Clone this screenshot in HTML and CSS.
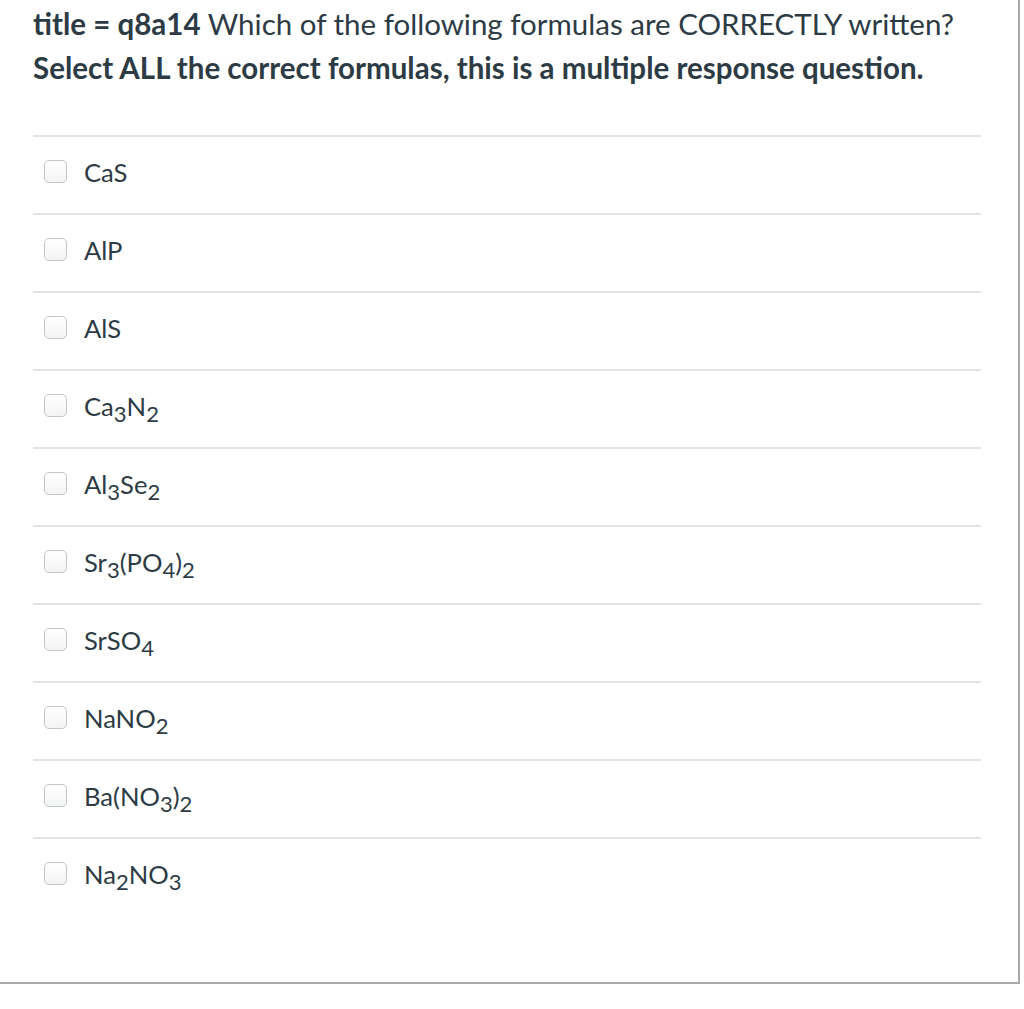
FILE: index.html
```html
<!DOCTYPE html>
<html lang='en'>

<head>
  <meta charset='utf-8'>
  <meta name='viewport' content='width=device-width, initial-scale=1'>
  <title>q8a14</title>
  <link rel="stylesheet" href="styles.css">
</head>

<body>
  <div class="question-box">
    <div class="question-text">
      <p><strong>title = q8a14</strong> Which of the following formulas are CORRECTLY written?</p>
      <p><strong>Select ALL the correct formulas, this is a multiple response question.</strong></p>
    </div>
    <ul class="answers">
      <li class="answer"><label><span class="check"></span><span>CaS</span></label></li>
      <li class="answer"><label><span class="check"></span><span>AlP</span></label></li>
      <li class="answer"><label><span class="check"></span><span>AlS</span></label></li>
      <li class="answer"><label><span class="check"></span><span>Ca<sub>3</sub>N<sub>2</sub></span></label></li>
      <li class="answer"><label><span class="check"></span><span>Al<sub>3</sub>Se<sub>2</sub></span></label></li>
      <li class="answer"><label><span class="check"></span><span>Sr<sub>3</sub>(PO<sub>4</sub>)<sub>2</sub></span></label></li>
      <li class="answer"><label><span class="check"></span><span>SrSO<sub>4</sub></span></label></li>
      <li class="answer"><label><span class="check"></span><span>NaNO<sub>2</sub></span></label></li>
      <li class="answer"><label><span class="check"></span><span>Ba(NO<sub>3</sub>)<sub>2</sub></span></label></li>
      <li class="answer"><label><span class="check"></span><span>Na<sub>2</sub>NO<sub>3</sub></span></label></li>
    </ul>
  </div>
</body>

</html>
```

FILE: styles.css
```css
* {
  margin: 0;
  padding: 0;
  box-sizing: border-box;
}

ul {
  list-style: none;
}

body {
  background-color: #fff;
  font-family: Lato, "Open Sans", sans-serif;
  color: #2d3b45;
}

.question-box {
  width: 1020px;
  padding: 0 37px 67px 33px;
  border-right: 2px solid #a9a9a9;
  border-bottom: 2px solid #a9a9a9;
}

.question-text {
  font-size: 29.5px;
  line-height: 44px;
  padding-top: 2px;
  padding-bottom: 45px;
}

.question-text strong {
  font-weight: 700;
}

.answers {
  font-size: 25.6px;
}

.answer {
  height: 78px;
  border-top: 2px solid #e3e3e3;
  display: flex;
  align-items: center;
  padding-bottom: 7px;
}

.answer label {
  display: flex;
  align-items: center;
  gap: 17px;
  padding-left: 11px;
}

.check {
  width: 23px;
  height: 23px;
  border: 1px solid #c2c6c9;
  border-radius: 5px;
  background: linear-gradient(#fff, #f3f4f5);
}

.answer sub {
  font-size: 0.86em;
  line-height: 0;
  vertical-align: -0.28em;
}
```
